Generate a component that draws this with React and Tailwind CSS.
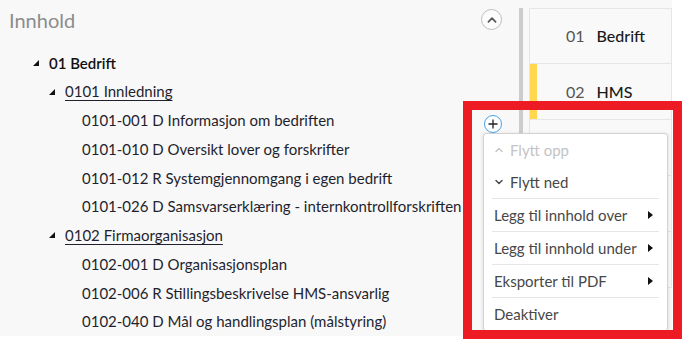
import React from "react";

const font = { fontFamily: "Lato, 'Open Sans', sans-serif" };

function Tri() {
  return (
    <svg width="6" height="6" viewBox="0 0 6 6" className="shrink-0">
      <polygon points="6,0 6,6 0,6" fill="#111" />
    </svg>
  );
}

function Row({ level, text, underline, bold, tri }) {
  const pl = level === 0 ? "pl-[33px]" : level === 1 ? "pl-[49px]" : "pl-[82px]";
  return (
    <div className={`h-[29px] flex items-center ${pl}`}>
      {tri && (
        <span className="w-[16px] flex items-center">
          <Tri />
        </span>
      )}
      <span
        className={`text-[15px] text-[#1f1f2e] whitespace-nowrap ${underline ? "underline underline-offset-[3px] decoration-[1px]" : ""} ${bold ? "font-semibold text-[#111]" : ""}`}
      >
        {text}
      </span>
    </div>
  );
}

function Card({ num, label, yellow, h }) {
  return (
    <div className={`${h} flex border border-[#e6e6e6] -mt-px bg-[#f9f9f9]`}>
      <div className={`w-[7px] shrink-0 ${yellow ? "bg-[#ffd84f]" : ""}`} />
      {num && (
        <div className="flex items-center pl-[29px] gap-[12px] text-[16px] whitespace-nowrap">
          <span className="text-[#555]">{num}</span>
          <span className="text-[#1a1a1a] font-medium">{label}</span>
        </div>
      )}
    </div>
  );
}

function ChevUp({ color = "#444", size = 10 }) {
  return (
    <svg width={size} height={size} viewBox="0 0 10 10">
      <polyline points="2,6.5 5,3.5 8,6.5" fill="none" stroke={color} strokeWidth="1.4" strokeLinecap="round" strokeLinejoin="round" />
    </svg>
  );
}
function ChevDown({ color = "#444", size = 10 }) {
  return (
    <svg width={size} height={size} viewBox="0 0 10 10">
      <polyline points="2,3.5 5,6.5 8,3.5" fill="none" stroke={color} strokeWidth="1.4" strokeLinecap="round" strokeLinejoin="round" />
    </svg>
  );
}
function Caret() {
  return (
    <svg width="5" height="8" viewBox="0 0 5 8">
      <polygon points="0,0 5,4 0,8" fill="#111" />
    </svg>
  );
}

function MenuItem({ children, caret, disabled, icon }) {
  return (
    <div className={`h-[32px] flex items-center justify-between pl-[10px] pr-[14px] text-[15px] ${disabled ? "text-[#c4c4c4]" : "text-[#474747]"}`}>
      <span className="flex items-center gap-[6px] whitespace-nowrap">
        {icon}
        {children}
      </span>
      {caret && <Caret />}
    </div>
  );
}

const Divider = () => <div className="h-px bg-[#e6e6e6] mx-[8px]" />;

export default function App() {
  return (
    <div className="w-[689px] h-[344px] bg-white relative overflow-hidden" style={font}>
      <div className="w-[672px] h-[336px] bg-[#f8f8f8] flex overflow-hidden">
        {/* left panel */}
        <div className="w-[519px] shrink-0 flex flex-col">
          <div className="h-[49px] flex items-start justify-between pl-[9px] pr-[17px] pt-[7px]">
            <span className="text-[20px] text-[#8c8c8c] leading-[26px]">Innhold</span>
            <span className="w-[21px] h-[21px] mt-[2px] rounded-full border border-[#bdbdbd] bg-[#fcfcfc] flex items-center justify-center">
              <ChevUp color="#555" size={12} />
            </span>
          </div>
          <Row level={0} tri bold text="01 Bedrift" />
          <Row level={1} tri underline text="0101 Innledning" />
          <Row level={2} text="0101-001 D Informasjon om bedriften" />
          <Row level={2} text="0101-010 D Oversikt lover og forskrifter" />
          <Row level={2} text="0101-012 R Systemgjennomgang i egen bedrift" />
          <Row level={2} text="0101-026 D Samsvarserklæring - internkontrollforskriften" />
          <Row level={1} tri underline text="0102 Firmaorganisasjon" />
          <Row level={2} text="0102-001 D Organisasjonsplan" />
          <Row level={2} text="0102-006 R Stillingsbeskrivelse HMS-ansvarlig" />
          <Row level={2} text="0102-040 D Mål og handlingsplan (målstyring)" />
        </div>
        {/* scrollbar */}
        <div className="w-[4px] shrink-0 mt-[8px] bg-[#cccccc]" />
        {/* right panel */}
        <div className="flex-1 pl-[6px] pt-[9px] flex flex-col overflow-hidden">
          <Card num="01" label="Bedrift" h="h-[56px]" />
          <Card num="02" label="HMS" yellow h="h-[57px]" />
          <Card h="h-[57px]" />
          <Card h="h-[57px]" />
          <Card h="h-[57px]" />
        </div>
      </div>

      {/* plus button */}
      <div className="absolute left-[484px] top-[115px] w-[18px] h-[18px] rounded-full border-[1.5px] border-[#45a4e6] bg-white flex items-center justify-center">
        <svg width="12" height="12" viewBox="0 0 12 12">
          <path d="M6 1.5v9M1.5 6h9" stroke="#222" strokeWidth="1.3" />
        </svg>
      </div>

      {/* context menu */}
      <div className="absolute left-[483px] top-[133px] w-[185px] bg-white border border-[#d2d2d2] rounded-[3px] shadow-[0_1px_4px_rgba(0,0,0,0.12)]">
        <MenuItem disabled icon={<ChevUp color="#c4c4c4" />}>Flytt opp</MenuItem>
        <MenuItem icon={<ChevDown color="#444" />}>Flytt ned</MenuItem>
        <Divider />
        <MenuItem caret>Legg til innhold over</MenuItem>
        <Divider />
        <MenuItem caret>Legg til innhold under</MenuItem>
        <Divider />
        <MenuItem caret>Eksporter til PDF</MenuItem>
        <Divider />
        <MenuItem>Deaktiver</MenuItem>
      </div>

      {/* red highlight frame */}
      <div className="absolute left-[463px] top-[101px] w-[219px] h-[238px] border-[9px] border-[#ed1c24] pointer-events-none" />
    </div>
  );
}
